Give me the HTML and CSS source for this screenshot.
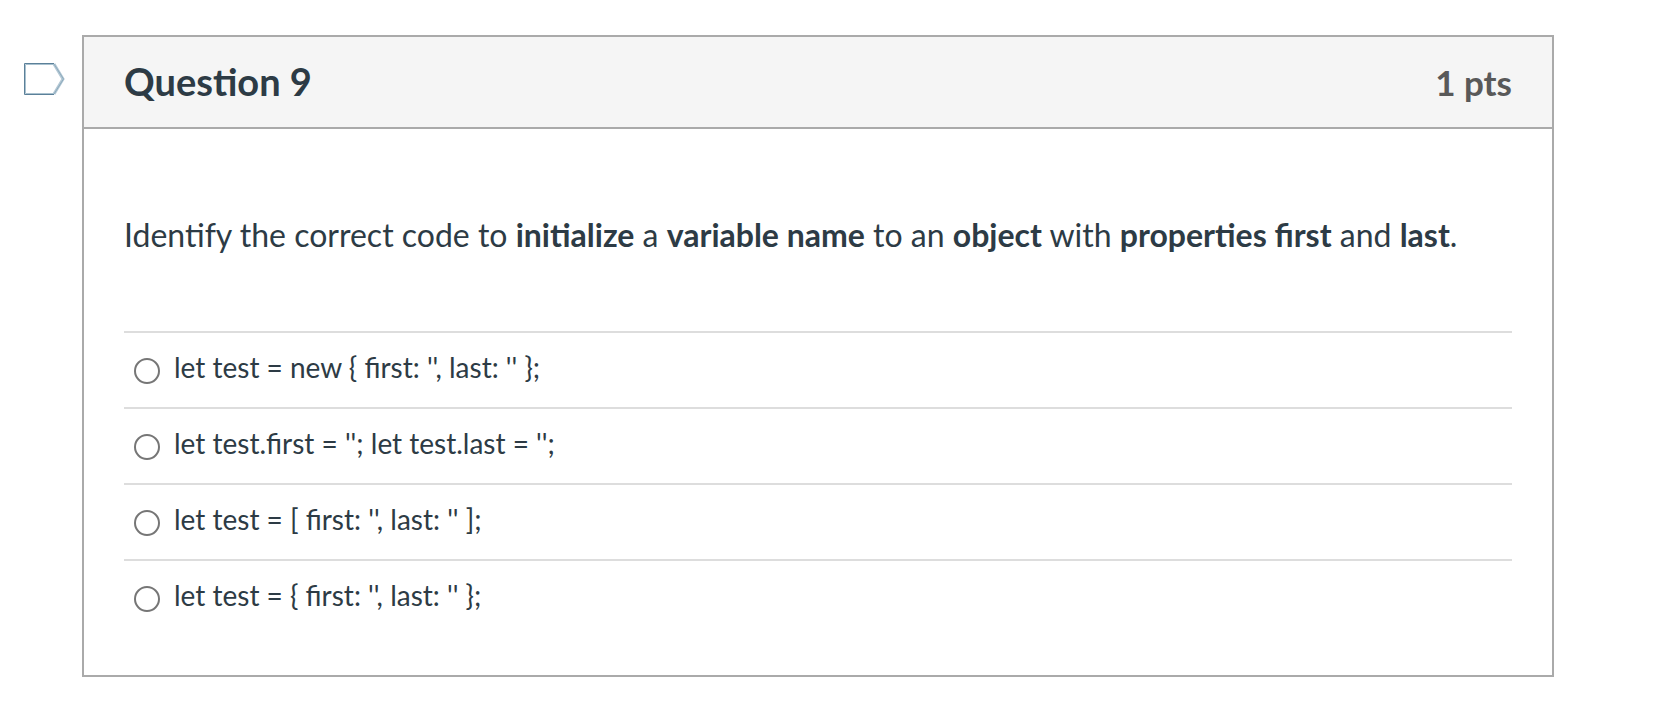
FILE: index.html
```
<!DOCTYPE html>
<html lang="en">
  <head>
    <meta charset="UTF-8" />
    <meta name="viewport" content="width=device-width, initial-scale=1.0" />
    <title>Question 9</title>
    <link rel="stylesheet" href="styles.css">
  </head>
  <body>
    <main class="quiz">
      <button class="flag" type="button" aria-label="Flag question">
        <svg width="41" height="32" viewBox="0 0 41 32" fill="none">
          <path d="M30 1L39 16L30 31" stroke="#b4c8d5" stroke-width="3" />
          <path d="M30 1L39.500 16L30 31" stroke="#8dabbd" />
          <path d="M30 1.500H1.500V30.500H30" stroke="#a9c1cf" />
          <path d="M30 .5H.5V31.500H30" stroke="#5b8099" />
        </svg>
      </button>

      <article class="question">
        <header class="question-header">
          <h2>Question 9</h2>
          <span class="points">1 pts</span>
        </header>

        <div class="question-body">
          <p class="question-text" id="question-text">
            Identify the correct code to <strong>initialize</strong> a
            <strong>variable name</strong> to an <strong>object</strong> with
            <strong>properties first</strong> and <strong>last</strong>.
          </p>

          <div class="answers" role="radiogroup" aria-labelledby="question-text">
            <label class="answer">
              <input type="radio" name="answer" />
              <span>let test = new { first: '', last: '' };</span>
            </label>
            <label class="answer">
              <input type="radio" name="answer" />
              <span>let test.first = ''; let test.last = '';</span>
            </label>
            <label class="answer">
              <input type="radio" name="answer" />
              <span>let test = [ first: '', last: '' ];</span>
            </label>
            <label class="answer">
              <input type="radio" name="answer" />
              <span>let test = { first: '', last: '' };</span>
            </label>
          </div>
        </div>
      </article>
    </main>
  </body>
</html>
```

FILE: styles.css
```
* {
  box-sizing: border-box;
}

body {
  margin: 0;
  background: #fff;
  color: #2d3b45;
  font-family: Lato, sans-serif;
}

.quiz {
  display: flex;
  align-items: flex-start;
  gap: 17px;
  padding: 35px 100px 32px 24px;
}

.flag {
  margin: 28px 0 0;
  padding: 0;
  border: 0;
  background: none;
}

.flag svg {
  display: block;
}

.question {
  flex: 1;
  border: 2px solid #aaa;
}

.question-header {
  display: flex;
  align-items: baseline;
  justify-content: space-between;
  padding: 18px 40px 20px;
  border-bottom: 2px solid #aaa;
  background: #f5f5f5;
  line-height: 52px;
}

.question-header h2 {
  margin: 0;
  font-size: 38px;
}

.points {
  color: #595959;
  font-size: 35px;
  font-weight: bold;
  line-height: 48px;
}

.question-body {
  padding: 82px 40px 40px;
}

.question-text {
  margin: 0 0 72px;
  font-size: 32px;
  line-height: 48px;
}

.answer {
  display: flex;
  align-items: center;
  gap: 14px;
  padding: 14px 10px 20px;
  border-top: 2px solid #ddd;
  font-size: 28px;
  line-height: 40px;
}

/* The circle sits a little below the middle of its text */
.answer input {
  appearance: none;
  width: 26px;
  height: 26px;
  margin: 8px 0 0;
  border: 2px solid #767676;
  border-radius: 50%;
  background: #fff;
}

.answer input:checked {
  background: radial-gradient(#2d3b45 50%, #fff 55%);
}
```
